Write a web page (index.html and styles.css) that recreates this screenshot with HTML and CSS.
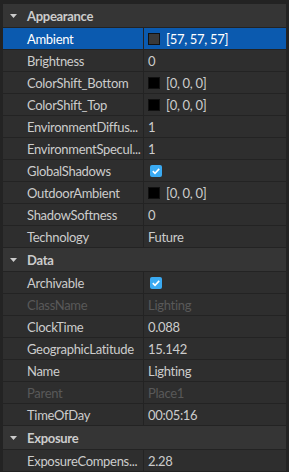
FILE: index.html
```html
<!DOCTYPE html>
<html lang="en">
<head>
    <meta charset="UTF-8">
    <meta name="viewport" content="width=device-width, initial-scale=1.0">
    <title>Properties - Lighting</title>
    <link rel="stylesheet" href="styles.css">
</head>
<body>
    <div class="panel">
        <div class="section-head">
            <svg class="caret" width="7" height="4" viewBox="0 0 7 4"><polygon points="0,0 7,0 3.5,4" fill="#cccccc"/></svg>
            <span>Appearance</span>
        </div>
        <div class="prop selected">
            <div class="prop-name">Ambient</div>
            <div class="prop-value"><span class="swatch swatch-gray"></span>[57, 57, 57]</div>
        </div>
        <div class="prop">
            <div class="prop-name">Brightness</div>
            <div class="prop-value">0</div>
        </div>
        <div class="prop">
            <div class="prop-name">ColorShift_Bottom</div>
            <div class="prop-value"><span class="swatch swatch-black"></span>[0, 0, 0]</div>
        </div>
        <div class="prop">
            <div class="prop-name">ColorShift_Top</div>
            <div class="prop-value"><span class="swatch swatch-black"></span>[0, 0, 0]</div>
        </div>
        <div class="prop">
            <div class="prop-name">EnvironmentDiffus...</div>
            <div class="prop-value">1</div>
        </div>
        <div class="prop">
            <div class="prop-name">EnvironmentSpecul...</div>
            <div class="prop-value">1</div>
        </div>
        <div class="prop">
            <div class="prop-name">GlobalShadows</div>
            <div class="prop-value">
                <svg class="check" width="12" height="12" viewBox="0 0 12 12"><rect width="12" height="12" rx="2" fill="#3aaaf2"/><path d="M2.8 6.2 L5 8.3 L9.2 3.9" fill="none" stroke="#ffffff" stroke-width="1.6"/></svg>
            </div>
        </div>
        <div class="prop">
            <div class="prop-name">OutdoorAmbient</div>
            <div class="prop-value"><span class="swatch swatch-black"></span>[0, 0, 0]</div>
        </div>
        <div class="prop">
            <div class="prop-name">ShadowSoftness</div>
            <div class="prop-value">0</div>
        </div>
        <div class="prop">
            <div class="prop-name">Technology</div>
            <div class="prop-value">Future</div>
        </div>

        <div class="section-head">
            <svg class="caret" width="7" height="4" viewBox="0 0 7 4"><polygon points="0,0 7,0 3.5,4" fill="#cccccc"/></svg>
            <span>Data</span>
        </div>
        <div class="prop">
            <div class="prop-name">Archivable</div>
            <div class="prop-value">
                <svg class="check" width="12" height="12" viewBox="0 0 12 12"><rect width="12" height="12" rx="2" fill="#3aaaf2"/><path d="M2.8 6.2 L5 8.3 L9.2 3.9" fill="none" stroke="#ffffff" stroke-width="1.6"/></svg>
            </div>
        </div>
        <div class="prop disabled">
            <div class="prop-name">ClassName</div>
            <div class="prop-value">Lighting</div>
        </div>
        <div class="prop">
            <div class="prop-name">ClockTime</div>
            <div class="prop-value">0.088</div>
        </div>
        <div class="prop">
            <div class="prop-name">GeographicLatitude</div>
            <div class="prop-value">15.142</div>
        </div>
        <div class="prop">
            <div class="prop-name">Name</div>
            <div class="prop-value">Lighting</div>
        </div>
        <div class="prop disabled">
            <div class="prop-name">Parent</div>
            <div class="prop-value">Place1</div>
        </div>
        <div class="prop">
            <div class="prop-name">TimeOfDay</div>
            <div class="prop-value">00:05:16</div>
        </div>

        <div class="section-head">
            <svg class="caret" width="7" height="4" viewBox="0 0 7 4"><polygon points="0,0 7,0 3.5,4" fill="#cccccc"/></svg>
            <span>Exposure</span>
        </div>
        <div class="prop">
            <div class="prop-name">ExposureCompens...</div>
            <div class="prop-value">2.28</div>
        </div>
    </div>
</body>
</html>
```

FILE: styles.css
```css
html, body {
    margin: 0;
    padding: 0;
    background-color: #232323;
}
body {
    font-family: Lato, "Open Sans", sans-serif;
    font-size: 13px;
    letter-spacing: -0.3px;
    color: #cccccc;
    overflow: hidden;
}
.panel {
    padding: 4px 3px 0 3px;
}
.section-head {
    display: flex;
    align-items: center;
    height: 23px;
    padding-left: 7px;
    background-color: #353535;
    border-bottom: 1px solid #232323;
    font-weight: bold;
    color: #cccccc;
}
.caret {
    margin-right: 10px;
    flex-shrink: 0;
}
.prop {
    display: flex;
    height: 21px;
    background-color: #2e2e2e;
    border-bottom: 1px solid #232323;
}
.prop-name {
    width: 116px;
    padding-left: 24px;
    border-right: 1px solid #232323;
    display: flex;
    align-items: center;
    white-space: nowrap;
    overflow: hidden;
}
.prop-value {
    flex: 1;
    padding-left: 4px;
    display: flex;
    align-items: center;
    white-space: nowrap;
    overflow: hidden;
}
.selected {
    background-color: #0b5aaf;
    color: #ffffff;
}
.disabled {
    color: #595959;
}
.swatch {
    width: 10px;
    height: 10px;
    border: 1px solid #111111;
    margin-right: 6px;
    flex-shrink: 0;
}
.swatch-gray {
    background-color: #393939;
}
.swatch-black {
    background-color: #000000;
}
.check {
    margin-left: 2px;
}
```
